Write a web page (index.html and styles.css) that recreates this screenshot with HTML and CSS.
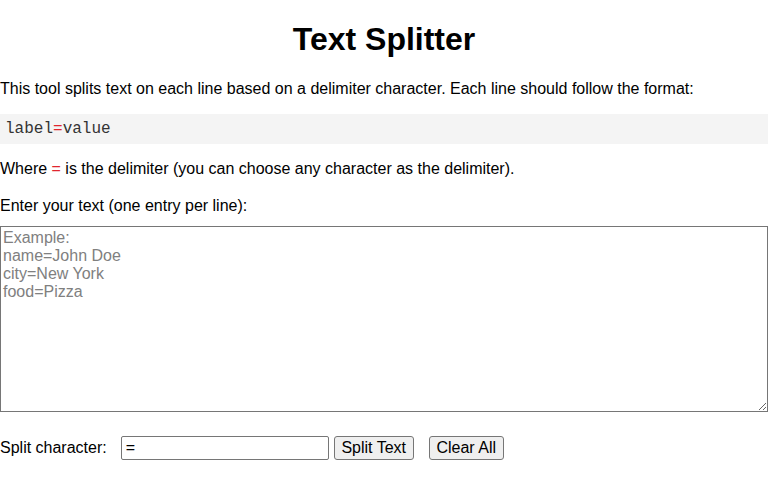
FILE: index.html
```html
<!DOCTYPE html>
<html>
<head>
<meta charset="utf-8">
<title>Text Splitter</title>
<link rel="stylesheet" href="styles.css">
</head>
<body>
<h1 class="title">Text Splitter</h1>
<p class="text">This tool splits text on each line based on a delimiter character. Each line should follow the format:</p>
<pre class="code">label<span class="delim">=</span>value</pre>
<p class="text">Where <span class="delim">=</span> is the delimiter (you can choose any character as the delimiter).</p>
<label class="input-label" for="txt">Enter your text (one entry per line):</label>
<textarea id="txt" class="text-input" rows="10" placeholder="Example:
name=John Doe
city=New York
food=Pizza"></textarea>
<div class="controls">
  <label class="split-label" for="delim">Split character:</label>
  <input id="delim" class="delim-input" type="text" value="=">
  <button class="btn btn-split">Split Text</button>
  <button class="btn btn-clear">Clear All</button>
</div>
</body>
</html>
```
FILE: styles.css
```css
html, body {
  margin: 0;
  padding: 0;
  background: #fff;
}
body {
  font-family: "Liberation Sans", Arial, sans-serif;
  font-size: 16px;
  color: #000;
}
.title {
  font-size: 32px;
  font-weight: bold;
  text-align: center;
  margin: 21px 0 22px;
  line-height: 37px;
}
.text {
  margin: 16px 0;
  line-height: 18px;
}
.code {
  margin: 0;
  background: #f4f4f4;
  padding: 6px 5px;
  font-family: Courier, "Nimbus Mono PS", "Nimbus Mono L", FreeMono, "Liberation Mono", monospace;
  font-size: 16px;
  line-height: 18px;
  color: #333;
}
.delim {
  color: #e0262f;
}
.input-label {
  display: block;
  margin-top: 19px;
  line-height: 18px;
}
.text-input {
  display: block;
  box-sizing: border-box;
  width: 100%;
  height: 186px;
  margin: 11px 0 0;
  padding: 2px;
  border: 1px solid #767676;
  font-family: "Liberation Sans", Arial, sans-serif;
  font-size: 16px;
  line-height: 18px;
  resize: vertical;
}
.text-input::placeholder {
  color: #808080;
}
.controls {
  display: flex;
  align-items: center;
  margin-top: 24px;
  height: 24px;
}
.split-label {
  margin-right: 14px;
  line-height: 18px;
}
.delim-input {
  box-sizing: border-box;
  width: 208px;
  height: 24px;
  margin: 0 5px 0 0;
  padding: 1px 4px;
  border: 1px solid #767676;
  border-radius: 2px;
  font-family: "Liberation Sans", Arial, sans-serif;
  font-size: 16px;
}
.btn {
  box-sizing: border-box;
  height: 24px;
  margin: 0;
  padding: 1px 6px;
  border: 1px solid #767676;
  border-radius: 3px;
  background: #efefef;
  font-family: "Liberation Sans", Arial, sans-serif;
  font-size: 16px;
  color: #000;
}
.btn-split {
  width: 80px;
  margin-right: 15px;
}
.btn-clear {
  width: 75px;
}
```
